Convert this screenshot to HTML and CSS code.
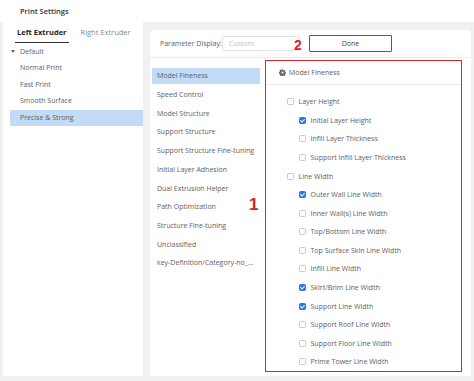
FILE: index.html
```html
<!DOCTYPE html>
<html lang="en">
<head>
    <meta charset="utf-8">
    <title>Print Settings</title>
    <link rel="stylesheet" href="styles.css">
</head>
<body>
    <div class="titlebar">Print Settings</div>

    <div class="main">
        <aside class="sidebar">
            <div class="tabs">
                <span class="tab active">Left Extruder</span>
                <span class="tab">Right Extruder</span>
            </div>
            <ul class="tree">
                <li class="tree-group"><span class="caret"></span>Default</li>
                <li>Normal Print</li>
                <li>Fast Print</li>
                <li>Smooth Surface</li>
                <li class="selected">Precise &amp; Strong</li>
            </ul>
        </aside>

        <section class="content">
            <div class="toolbar">
                <span class="label">Parameter Display:</span>
                <div class="select">Custom</div>
                <button class="done">Done</button>
                <span class="mark mark-2">2</span>
            </div>

            <div class="panes">
                <ul class="categories">
                    <li class="selected">Model Fineness</li>
                    <li>Speed Control</li>
                    <li>Model Structure</li>
                    <li>Support Structure</li>
                    <li>Support Structure Fine-tuning</li>
                    <li>Initial Layer Adhesion</li>
                    <li>Dual Extrusion Helper</li>
                    <li>Path Optimization</li>
                    <li>Structure Fine-tuning</li>
                    <li>Unclassified</li>
                    <li>key-Definition/Category-no_...</li>
                </ul>

                <div class="settings">
                    <div class="settings-head">
                        <svg class="gear" viewBox="0 0 16 16" width="7" height="7">
                            <path d="M6.6 0.8h2.8l0.4 2 1.3 0.6 1.7-1.1 2 2-1.1 1.7 0.6 1.3 2 0.4v2.8l-2 0.4-0.6 1.3 1.1 1.7-2 2-1.7-1.1-1.3 0.6-0.4 2H6.6l-0.4-2-1.3-0.6-1.7 1.1-2-2 1.1-1.7-0.6-1.3-2-0.4V6.6l2-0.4 0.6-1.3-1.1-1.7 2-2 1.7 1.1 1.3-0.6z" fill="#666"/>
                            <circle cx="8" cy="8" r="2.4" fill="#fff"/>
                        </svg>
                        Model Fineness
                    </div>
                    <ul class="options">
                        <li class="lvl1"><span class="cb"></span>Layer Height</li>
                        <li class="lvl2"><span class="cb checked"></span>Initial Layer Height</li>
                        <li class="lvl2"><span class="cb"></span>Infill Layer Thickness</li>
                        <li class="lvl2"><span class="cb"></span>Support Infill Layer Thickness</li>
                        <li class="lvl1"><span class="cb"></span>Line Width</li>
                        <li class="lvl2"><span class="cb checked"></span>Outer Wall Line Width</li>
                        <li class="lvl2"><span class="cb"></span>Inner Wall(s) Line Width</li>
                        <li class="lvl2"><span class="cb"></span>Top/Bottom Line Width</li>
                        <li class="lvl2"><span class="cb"></span>Top Surface Skin Line Width</li>
                        <li class="lvl2"><span class="cb"></span>Infill Line Width</li>
                        <li class="lvl2"><span class="cb checked"></span>Skirt/Brim Line Width</li>
                        <li class="lvl2"><span class="cb checked"></span>Support Line Width</li>
                        <li class="lvl2"><span class="cb"></span>Support Roof Line Width</li>
                        <li class="lvl2"><span class="cb"></span>Support Floor Line Width</li>
                        <li class="lvl2"><span class="cb"></span>Prime Tower Line Width</li>
                    </ul>
                </div>

                <span class="mark mark-1">1</span>
            </div>
        </section>
    </div>
</body>
</html>
```

FILE: styles.css
```css
:root {
    --text: #5e5e5e;
    --line: #ececec;
    --select-bg: #c3dbf6;
    --check: #2a78e6;
    --mark: #d8232f;
}

* {
    margin: 0;
    padding: 0;
    box-sizing: border-box;
}

body {
    width: 474px;
    height: 381px;
    overflow: hidden;
    background: #f1f1f1;
    font-family: 'Open Sans', 'Noto Sans', sans-serif;
    font-size: 7px;
    color: var(--text);
}

ul {
    list-style: none;
}

.titlebar {
    height: 22px;
    line-height: 22px;
    padding-left: 20px;
    background: #fff;
    font-size: 7.5px;
    font-weight: 600;
    color: #333;
}

.main {
    display: flex;
    gap: 7px;
    height: 354px;
    padding: 0 3px;
}

/* left column */
.sidebar {
    width: 140px;
    background: #fff;
}

.tabs {
    display: flex;
    gap: 10px;
    height: 21.5px;
    padding-left: 12px;
}

.tab {
    padding: 0 2px;
    line-height: 20px;
    height: 21px;
    font-size: 7.5px;
    color: #8a8a8a;
}

.tab.active {
    font-weight: 700;
    color: #222;
    border-bottom: 1.5px solid #333;
}

.tree li {
    height: 16.5px;
    line-height: 16.5px;
    margin-left: 7px;
    padding-left: 10px;
}

.tree li.selected {
    background: var(--select-bg);
}

.caret {
    display: inline-block;
    width: 0;
    height: 0;
    margin-left: -9px;
    margin-right: 5px;
    border-left: 2.5px solid transparent;
    border-right: 2.5px solid transparent;
    border-top: 3.5px solid #666;
    vertical-align: 1px;
}

/* right column */
.content {
    flex: 1;
    display: flex;
    flex-direction: column;
    margin-top: 8px;
    background: #fff;
    border-radius: 4px 4px 0 0;
}

.toolbar {
    position: relative;
    display: flex;
    align-items: center;
    height: 31px;
    padding-left: 10px;
    border-bottom: 1px solid var(--line);
}

.label {
    width: 62px;
}

.select {
    width: 78px;
    height: 15px;
    line-height: 13px;
    padding-left: 6px;
    border: 1px solid #e2e2e2;
    border-radius: 2px;
    color: #c4c4c4;
}

.done {
    width: 83px;
    height: 17px;
    margin-left: 9px;
    background: #fff;
    border: 1.5px solid var(--mark);
    border-radius: 1px;
    font: inherit;
    color: #444;
}

.mark {
    position: absolute;
    font-family: 'Liberation Sans', sans-serif;
    font-weight: 700;
    color: var(--mark);
}

.mark-2 {
    left: 144px;
    top: 7px;
    font-size: 14px;
}

.panes {
    position: relative;
    flex: 1;
    display: flex;
}

.categories {
    width: 112px;
    padding: 10px 2px 0;
}

.categories li {
    height: 16px;
    line-height: 16px;
    margin-bottom: 2.7px;
    padding-left: 5px;
    white-space: nowrap;
}

.categories li.selected {
    background: var(--select-bg);
}

.mark-1 {
    left: 99px;
    top: 137px;
    font-size: 17px;
}

.settings {
    flex: 1;
    margin: 2px 9px 4px 3px;
    border: 1.5px solid var(--mark);
}

.settings-head {
    display: flex;
    align-items: center;
    gap: 3px;
    height: 24px;
    padding-left: 13px;
    border-bottom: 1px solid var(--line);
}

.options {
    padding-top: 7.2px;
}

.options li {
    display: flex;
    align-items: center;
    gap: 5px;
    height: 18.57px;
    white-space: nowrap;
}

.options .lvl1 {
    padding-left: 20.5px;
}

.options .lvl2 {
    padding-left: 32.5px;
}

.cb {
    position: relative;
    width: 7px;
    height: 7px;
    border: 1px solid #c8c8c8;
    border-radius: 1.5px;
    background: #fff;
}

.cb.checked {
    background: var(--check);
    border-color: var(--check);
}

.cb.checked::after {
    content: '';
    position: absolute;
    left: 1.5px;
    top: 0.2px;
    width: 1.6px;
    height: 3px;
    border-right: 1px solid #fff;
    border-bottom: 1px solid #fff;
    transform: rotate(45deg);
}
```
